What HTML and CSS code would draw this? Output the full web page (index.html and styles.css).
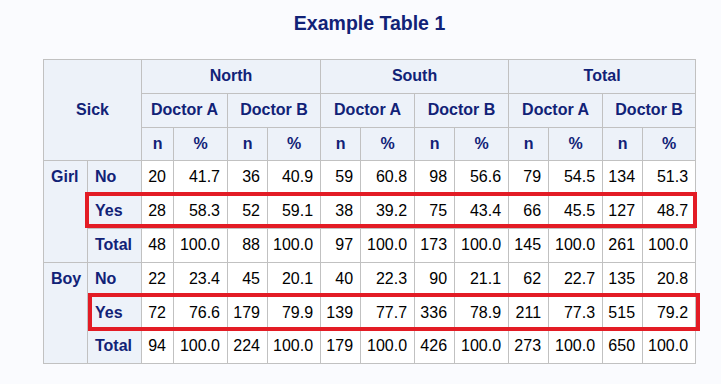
FILE: index.html
```html
<!DOCTYPE html>
<html>
<head>
<meta charset="utf-8">
<link rel="stylesheet" href="styles.css">
</head>
<body>
<div class="page">
  <div class="wrap">
    <div class="title">Example Table 1</div>
    <table class="tbl">
      <colgroup>
        <col class="c44"><col class="c54">
        <col class="c32"><col class="c54"><col class="c40"><col class="c53">
        <col class="c40"><col class="c54"><col class="c40"><col class="c54">
        <col class="c40"><col class="c54"><col class="c40"><col class="c53">
      </colgroup>
      <thead>
        <tr>
          <th class="hd" colspan="2" rowspan="3">Sick</th>
          <th class="hd" colspan="4">North</th>
          <th class="hd" colspan="4">South</th>
          <th class="hd" colspan="4">Total</th>
        </tr>
        <tr>
          <th class="hd" colspan="2">Doctor A</th>
          <th class="hd" colspan="2">Doctor B</th>
          <th class="hd" colspan="2">Doctor A</th>
          <th class="hd" colspan="2">Doctor B</th>
          <th class="hd" colspan="2">Doctor A</th>
          <th class="hd" colspan="2">Doctor B</th>
        </tr>
        <tr>
          <th class="hd">n</th><th class="hd">%</th>
          <th class="hd">n</th><th class="hd">%</th>
          <th class="hd">n</th><th class="hd">%</th>
          <th class="hd">n</th><th class="hd">%</th>
          <th class="hd">n</th><th class="hd">%</th>
          <th class="hd">n</th><th class="hd">%</th>
        </tr>
      </thead>
      <tbody>
        <tr>
          <th class="rh top" rowspan="3">Girl</th>
          <th class="rh">No</th>
          <td>20</td><td>41.7</td><td>36</td><td>40.9</td><td>59</td><td>60.8</td><td>98</td><td>56.6</td><td>79</td><td>54.5</td><td>134</td><td>51.3</td>
        </tr>
        <tr>
          <th class="rh">Yes</th>
          <td>28</td><td>58.3</td><td>52</td><td>59.1</td><td>38</td><td>39.2</td><td>75</td><td>43.4</td><td>66</td><td>45.5</td><td>127</td><td>48.7</td>
        </tr>
        <tr>
          <th class="rh">Total</th>
          <td>48</td><td>100.0</td><td>88</td><td>100.0</td><td>97</td><td>100.0</td><td>173</td><td>100.0</td><td>145</td><td>100.0</td><td>261</td><td>100.0</td>
        </tr>
        <tr>
          <th class="rh top" rowspan="3">Boy</th>
          <th class="rh">No</th>
          <td>22</td><td>23.4</td><td>45</td><td>20.1</td><td>40</td><td>22.3</td><td>90</td><td>21.1</td><td>62</td><td>22.7</td><td>135</td><td>20.8</td>
        </tr>
        <tr>
          <th class="rh">Yes</th>
          <td>72</td><td>76.6</td><td>179</td><td>79.9</td><td>139</td><td>77.7</td><td>336</td><td>78.9</td><td>211</td><td>77.3</td><td>515</td><td>79.2</td>
        </tr>
        <tr>
          <th class="rh">Total</th>
          <td>94</td><td>100.0</td><td>224</td><td>100.0</td><td>179</td><td>100.0</td><td>426</td><td>100.0</td><td>273</td><td>100.0</td><td>650</td><td>100.0</td>
        </tr>
      </tbody>
    </table>
    <div class="mark mark-girl"></div>
    <div class="mark mark-boy"></div>
  </div>
</div>
</body>
</html>
```
FILE: styles.css
```css
html, body {
  margin: 0;
  padding: 0;
  background: #fafbfe;
}
.page {
  padding: 11px 0 0 43px;
  font-family: "Liberation Sans", Arial, sans-serif;
}
.wrap {
  position: relative;
  display: inline-block;
}
.title {
  text-align: center;
  font-weight: bold;
  font-size: 19.5px;
  line-height: 24px;
  color: #112277;
  margin-bottom: 24px;
}
.tbl {
  border-collapse: collapse;
  table-layout: fixed;
  width: 653px;
  border: 1px solid #c1c1c1;
  font-size: 16px;
  line-height: 18.8px;
}
.c32 { width: 32px; }
.c40 { width: 40px; }
.c44 { width: 44px; }
.c53 { width: 53px; }
.c54 { width: 54px; }
.tbl th, .tbl td {
  border: 1px solid #c1c1c1;
  padding: 7px 7px;
  white-space: nowrap;
  overflow: hidden;
}
.hd {
  background: #edf2f9;
  color: #112277;
  font-weight: bold;
  text-align: center;
  vertical-align: middle;
}
.rh {
  background: #edf2f9;
  color: #112277;
  font-weight: bold;
  text-align: left;
  vertical-align: middle;
}
.rh.top {
  vertical-align: top;
}
.tbl td {
  background: #ffffff;
  color: #000000;
  text-align: right;
  padding-right: 7px;
  padding-left: 2px;
}
.mark {
  position: absolute;
  border: 4px solid #e31c25;
  width: 604px;
  box-sizing: content-box;
  pointer-events: none;
}
.mark-girl {
  left: 42px;
  top: 181px;
  height: 28px;
}
.mark-boy {
  left: 45px;
  top: 282px;
  height: 30px;
}
```
